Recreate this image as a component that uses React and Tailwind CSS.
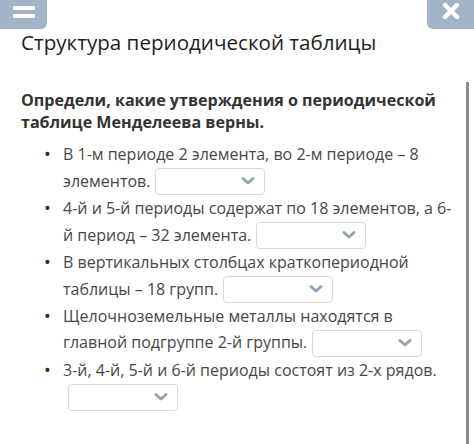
import React from "react";

function Dropdown() {
  return (
    <span className="inline-flex items-center justify-end align-middle ml-[5px] w-[110px] h-[27px] border border-[#d5d9dc] rounded-[4px] bg-white pr-[9px] -mt-[2px]">
      <svg width="14" height="10" viewBox="0 0 14 10">
        <path d="M2 2.5 L7 7 L12 2.5" fill="none" stroke="#8fa7b3" strokeWidth="3" strokeLinecap="round" strokeLinejoin="round" />
      </svg>
    </span>
  );
}

const items = [
  "В 1-м периоде 2 элемента, во 2-м периоде – 8 элементов.",
  "4-й и 5-й периоды содержат по 18 элементов, а 6-й период – 32 элемента.",
  "В вертикальных столбцах краткопериодной таблицы – 18 групп.",
  "Щелочноземельные металлы находятся в главной подгруппе 2-й группы.",
  "3-й, 4-й, 5-й и 6-й периоды состоят из 2-х рядов.",
];

export default function App() {
  return (
    <div className="relative w-[474px] h-[444px] bg-white overflow-hidden" style={{ fontFamily: '"Open Sans", sans-serif' }}>
      <div className="absolute left-0 top-0 w-[47px] h-[29px] bg-[#a2b3c5] rounded-br-[6px] flex items-center justify-center">
        <div className="flex flex-col gap-[4px] -mt-[6px]">
          <div className="w-[22px] h-[4px] bg-white rounded-[1px]" />
          <div className="w-[22px] h-[4px] bg-white rounded-[1px]" />
        </div>
      </div>
      <div className="absolute right-0 top-0 w-[47px] h-[29px] bg-[#a2b3c5] rounded-bl-[6px] flex items-center justify-center">
        <svg width="18" height="16" viewBox="0 0 18 16" className="-mt-[8px]">
          <path d="M3 2 L15 14 M15 2 L3 14" stroke="white" strokeWidth="4.5" strokeLinecap="round" />
        </svg>
      </div>
      <div className="absolute right-[5px] top-[82px] bottom-0 w-[3px] bg-[#8c8c8c]" />

      <div className="pl-[21px] pr-[19px] pt-[26px]">
        <h1 className="text-[20.6px] leading-[32px] text-[#1e1e1e] font-normal">Структура периодической таблицы</h1>
        <p className="mt-[31px] pr-[8px] text-[16.1px] leading-[22px] font-bold text-[#333]">
          Определи, какие утверждения о периодической таблице Менделеева верны.
        </p>
        <ul className="mt-[8px] pl-[42px] text-[16px] leading-[26.7px] text-[#474747]">
          {items.map((t, i) => (
            <li key={i} className="relative">
              <span className="absolute -left-[19px] top-0 text-[18px] text-[#2e2e2e]">•</span>
              {t}
              <Dropdown />
            </li>
          ))}
        </ul>
      </div>
    </div>
  );
}
